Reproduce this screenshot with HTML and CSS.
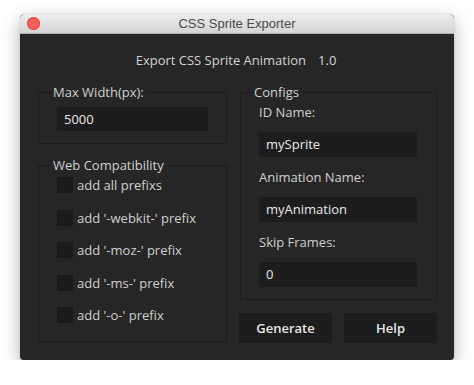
FILE: index.html
```html
<!DOCTYPE html>
<html>
<head>
    <link rel="stylesheet" href="styles.css">
</head>
<body>
    <div class="window">
        <div class="titlebar">
            <span class="close-dot"></span>
            <span class="title">CSS Sprite Exporter</span>
        </div>
        <div class="content">
            <div class="heading">Export CSS Sprite Animation<span class="version">1.0</span></div>
            <div class="columns">
                <div class="col">
                    <fieldset class="group max-width">
                        <legend>Max Width(px):</legend>
                        <div class="field">5000</div>
                    </fieldset>
                    <fieldset class="group compat">
                        <legend>Web Compatibility</legend>
                        <div class="checks">
                            <div class="check-row"><span class="box"></span>add all prefixs</div>
                            <div class="check-row"><span class="box"></span>add '-webkit-' prefix</div>
                            <div class="check-row"><span class="box"></span>add '-moz-' prefix</div>
                            <div class="check-row"><span class="box"></span>add '-ms-' prefix</div>
                            <div class="check-row"><span class="box"></span>add '-o-' prefix</div>
                        </div>
                    </fieldset>
                </div>
                <div class="col">
                    <fieldset class="group configs">
                        <legend>Configs</legend>
                        <div class="label">ID Name:</div>
                        <div class="field wide">mySprite</div>
                        <div class="label">Animation Name:</div>
                        <div class="field wide">myAnimation</div>
                        <div class="label">Skip Frames:</div>
                        <div class="field wide">0</div>
                    </fieldset>
                    <div class="buttons">
                        <div class="btn">Generate</div>
                        <div class="btn">Help</div>
                    </div>
                </div>
            </div>
        </div>
    </div>
</body>
</html>
```

FILE: styles.css
```css
body {
    margin: 0;
    background-color: #ffffff;
    font-family: "Open Sans", "Noto Sans", sans-serif;
    font-size: 13px;
}

.window {
    margin: 14px 0 0 20px;
    width: 434px;
    height: 346px;
    background-color: #262626;
    border-radius: 5px 5px 4px 4px;
    box-shadow: 0 6px 18px rgba(0, 0, 0, 0.3), 0 0 1px rgba(0, 0, 0, 0.4);
    overflow: hidden;
    display: flex;
    flex-direction: column;
}

.titlebar {
    height: 19px;
    background: linear-gradient(#ededed, #d5d5d5);
    border-bottom: 1px solid #b0b0b0;
    display: flex;
    align-items: center;
    justify-content: center;
    position: relative;
}

.close-dot {
    position: absolute;
    left: 7px;
    top: 3px;
    width: 13px;
    height: 13px;
    border-radius: 50%;
    background-color: #fc5d57;
    box-shadow: inset 0 0 0 1px #e2463f;
}

.title {
    color: #4a4a4a;
    font-family: "Liberation Sans", Arial, sans-serif;
    font-size: 13px;
}

.content {
    padding: 17px 17px 0 18px;
}

.heading {
    text-align: center;
    color: #d2d2d2;
    line-height: 18px;
    padding-right: 3px;
}

.version {
    margin-left: 12px;
}

.columns {
    display: grid;
    grid-template-columns: 189px 197px;
    column-gap: 13px;
    margin-top: 15px;
}

.group {
    margin: 0;
    border: 1px solid #1c1c1c;
    padding: 0 0 0 18px;
    min-width: 0;
}

.group legend {
    color: #cfcfcf;
    padding: 0 1px;
    margin-left: -5px;
    line-height: 17px;
}

.configs legend {
    margin-left: -6px;
}

.field {
    background-color: #1d1d1d;
    color: #e8e8e8;
    height: 24px;
    line-height: 24px;
    padding-left: 7px;
    width: 144px;
}

.field.wide {
    width: 151px;
    height: 25px;
    line-height: 25px;
}

.max-width {
    padding-top: 6px;
    padding-bottom: 12px;
}

.compat {
    margin-top: 13px;
    padding-top: 3px;
    padding-bottom: 18px;
}

.checks {
    display: flex;
    flex-direction: column;
    gap: 16.5px;
}

.check-row {
    display: flex;
    align-items: center;
    height: 16px;
    color: #cfcfcf;
}

.box {
    width: 16px;
    height: 16px;
    background-color: #1a1a1a;
    margin-right: 4px;
}

.configs {
    padding-top: 3px;
    padding-bottom: 12px;
}

.label {
    color: #cfcfcf;
    line-height: 16px;
    margin-bottom: 12px;
}

.configs .field + .label {
    margin-top: 12px;
}

.buttons {
    display: grid;
    grid-template-columns: 93px 93px;
    column-gap: 12px;
    margin: 13px 0 0 -1px;
}

.btn {
    height: 30px;
    line-height: 30px;
    text-align: center;
    background-color: #1d1d1d;
    color: #e6e6e6;
    font-weight: 600;
}
```
